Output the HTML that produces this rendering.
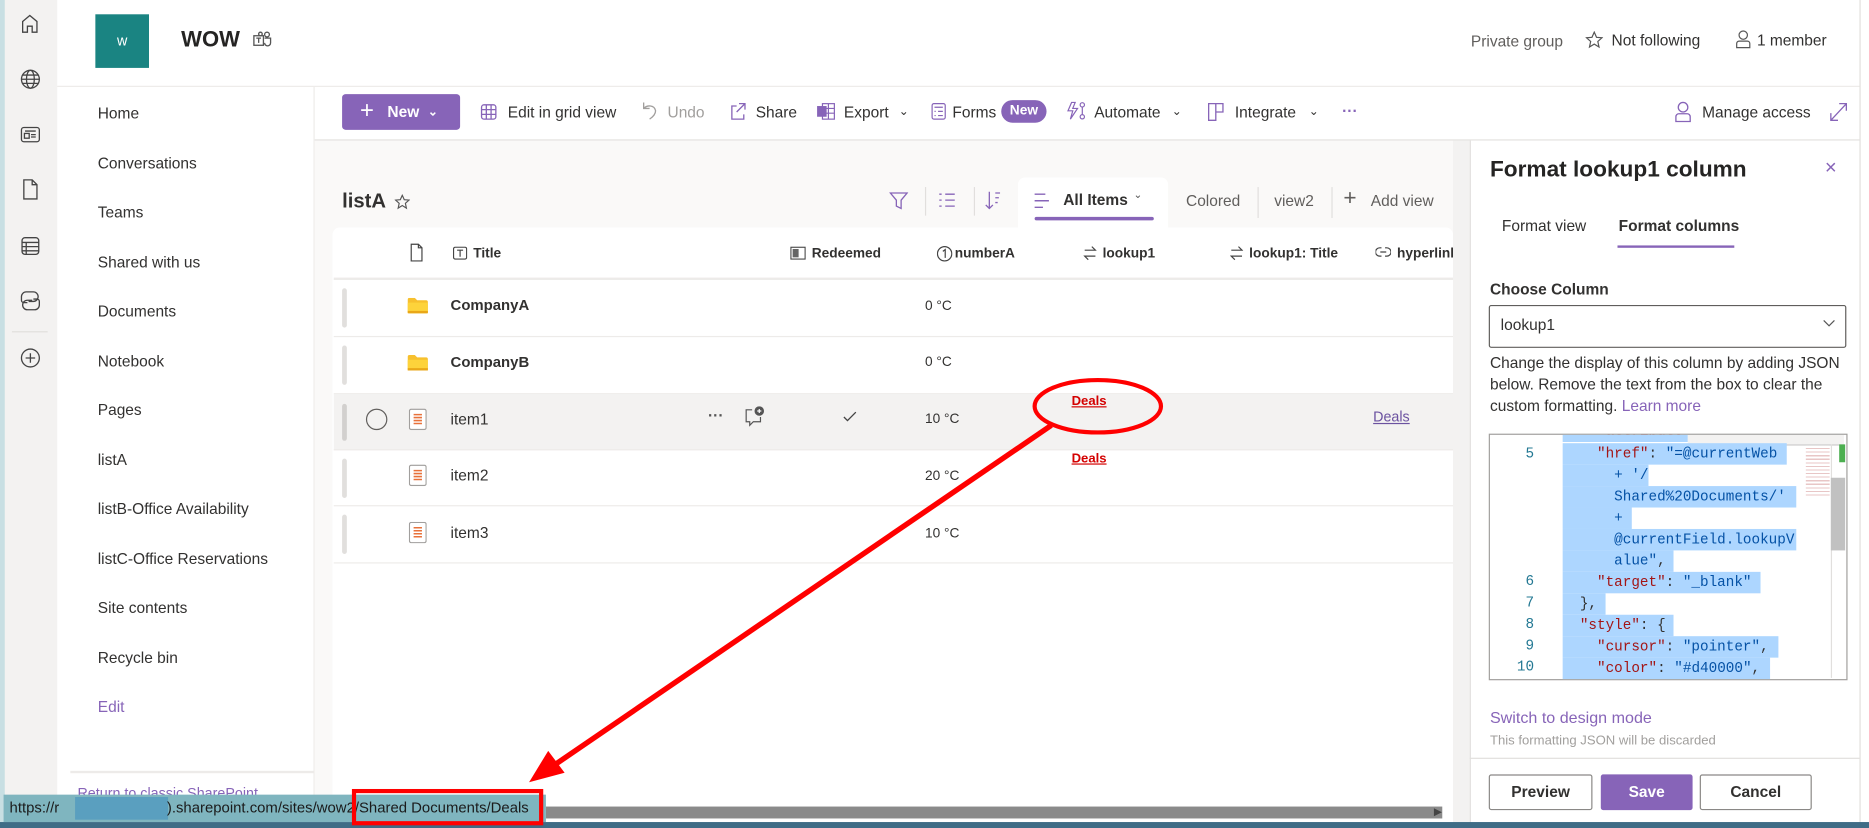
<!DOCTYPE html>
<html><head><meta charset="utf-8">
<style>
html,body{margin:0;padding:0;width:1869px;height:828px;overflow:hidden;background:#fff;}
#w{position:absolute;left:0;top:0;width:1568px;height:695px;transform:scale(1.19196,1.19137);transform-origin:0 0;font-family:"Liberation Sans",sans-serif;color:#323130;font-size:13px;overflow:hidden;background:#fff;}
.a{position:absolute;white-space:nowrap;}
.nav{position:absolute;left:82px;font-size:13px;color:#323130;transform:translateY(-50%);}
.cmd{position:absolute;top:94px;transform:translateY(-50%);font-size:13px;color:#323130;}
.ic{position:absolute;}
.hd{position:absolute;top:213px;transform:translateY(-50%);font-size:11.5px;font-weight:bold;color:#323130;}
.row{position:absolute;left:280px;width:939px;border-bottom:1px solid #edebe9;}
.hbar{position:absolute;left:7px;width:4px;border-radius:2px;background:#e1dfdd;}
.nm{position:absolute;left:98px;font-size:12.5px;font-weight:bold;color:#323130;transform:translateY(-50%);}
.tmp{position:absolute;left:496px;font-size:11.5px;transform:translateY(-50%);}
.cl{position:absolute;left:1311px;height:18px;font-family:"Liberation Mono",monospace;font-size:12px;line-height:18px;background:#add6ff;white-space:pre;}
.ln{position:absolute;width:40px;left:1247px;text-align:right;font-family:"Liberation Mono",monospace;font-size:12px;color:#237893;line-height:18px;}
.k{color:#a31515}.v{color:#0451a5}
.btn{position:absolute;top:650px;height:28px;border:1px solid #8a8886;border-radius:2px;font-size:13px;font-weight:bold;text-align:center;line-height:28px;}
</style></head><body><div id="w">

<div class="a" style="left:0;top:0;width:48px;height:695px;background:#f3f2f1;"></div>
<div class="a" style="left:0;top:0;width:4px;height:695px;background:#c8dfe3;"></div>
<div class="a" style="left:10px;top:278px;width:30px;height:1px;background:#e1dfdd;"></div>
<svg class="ic" style="left:17px;top:11px" width="16" height="17" viewBox="0 0 16 17" fill="none" stroke="#444" stroke-width="1.1"><path d="M2 7 L8 2 L14 7 V16 H10 V11 H6 V16 H2 Z"/></svg>
<svg class="ic" style="left:17px;top:58px" width="17" height="17" viewBox="0 0 17 17" fill="none" stroke="#444" stroke-width="1.1"><circle cx="8.5" cy="8.5" r="7.5"/><ellipse cx="8.5" cy="8.5" rx="3.3" ry="7.5"/><path d="M1 8.5H16M2 5H15M2 12H15"/></svg>
<svg class="ic" style="left:17px;top:105px" width="17" height="16" viewBox="0 0 17 16" fill="none" stroke="#444" stroke-width="1.1"><rect x="1" y="2" width="15" height="12" rx="2"/><rect x="3.5" y="7" width="4" height="4"/><path d="M4 5H13M9 8H13M9 10H13"/></svg>
<svg class="ic" style="left:19px;top:150px" width="13" height="18" viewBox="0 0 13 18" fill="none" stroke="#444" stroke-width="1.1"><path d="M1 1H8L12 5V17H1Z M8 1V5H12"/></svg>
<svg class="ic" style="left:17px;top:198px" width="17" height="17" viewBox="0 0 17 17" fill="none" stroke="#444" stroke-width="1.1"><rect x="1.5" y="1.5" width="14" height="14" rx="2.5"/><path d="M1.5 5.5H15.5M1.5 9H15.5M1.5 12.5H15.5M5 5.5V15.5"/></svg>
<svg class="ic" style="left:17px;top:244px" width="17" height="17" viewBox="0 0 17 17" fill="none" stroke="#444" stroke-width="1.1"><path d="M6 10 H3 a2 2 0 0 1 -2 -2 V5 a4 4 0 0 1 4 -4 H11 a4 4 0 0 1 0 8 H7 M11 7 H14 a2 2 0 0 1 2 2 V12 a4 4 0 0 1 -4 4 H6 a4 4 0 0 1 0 -8 H10"/></svg>
<svg class="ic" style="left:17px;top:292px" width="17" height="17" viewBox="0 0 17 17" fill="none" stroke="#444" stroke-width="1.1"><circle cx="8.5" cy="8.5" r="7.5"/><path d="M8.5 4.5V12.5M4.5 8.5H12.5"/></svg>

<div class="a" style="left:80px;top:12px;width:45px;height:45px;background:#1a8482;color:#fff;font-size:12px;text-align:center;line-height:45px;">w</div>
<div class="a" style="left:152px;top:22px;font-size:18.5px;font-weight:bold;color:#252423;">WOW</div>
<svg class="ic" style="left:212px;top:26px" width="16" height="15" viewBox="0 0 16 15" fill="none" stroke="#555" stroke-width="1.1"><rect x="1" y="4" width="8" height="8"/><path d="M3 6H7M5 6V10"/><circle cx="12" cy="3" r="2"/><path d="M10 6H15V10a2.5 2.5 0 0 1 -5 0"/><circle cx="6.5" cy="2.5" r="1.5"/></svg>
<div class="a" style="left:1234px;top:27px;font-size:13px;color:#605e5c;">Private group</div>
<svg class="ic" style="left:1330px;top:26px" width="15" height="15" viewBox="0 0 15 15" fill="none" stroke="#555" stroke-width="1"><path d="M7.5 1L9.4 5.3L14 5.7L10.5 8.8L11.5 13.5L7.5 11L3.5 13.5L4.5 8.8L1 5.7L5.6 5.3Z"/></svg>
<div class="a" style="left:1352px;top:26px;font-size:13px;color:#323130;">Not following</div>
<svg class="ic" style="left:1456px;top:25px" width="13" height="16" viewBox="0 0 13 16" fill="none" stroke="#555" stroke-width="1"><circle cx="6.5" cy="4.5" r="3.5"/><path d="M1 15V11.5a2 2 0 0 1 2 -2H10a2 2 0 0 1 2 2V15Z"/></svg>
<div class="a" style="left:1474px;top:26px;font-size:13px;color:#323130;">1 member</div>
<div class="a" style="left:48px;top:72px;width:1520px;height:1px;background:#edebe9;"></div>

<div class="a" style="left:263px;top:73px;width:1px;height:622px;background:#edebe9;"></div>
<div class="nav" style="top:95px">Home</div>
<div class="nav" style="top:137px">Conversations</div>
<div class="nav" style="top:178px">Teams</div>
<div class="nav" style="top:220px">Shared with us</div>
<div class="nav" style="top:261px">Documents</div>
<div class="nav" style="top:303px">Notebook</div>
<div class="nav" style="top:344px">Pages</div>
<div class="nav" style="top:386px">listA</div>
<div class="nav" style="top:427px">listB-Office Availability</div>
<div class="nav" style="top:469px">listC-Office Reservations</div>
<div class="nav" style="top:510px">Site contents</div>
<div class="nav" style="top:552px">Recycle bin</div>
<div class="nav" style="top:593px;color:#8764b8">Edit</div>
<div class="a" style="left:59px;top:647px;width:204px;height:2px;background:#edebe9;"></div>
<div class="a" style="left:65px;top:659px;font-size:12px;color:#8764b8;">Return to classic SharePoint</div>

<div class="a" style="left:264px;top:117px;width:1304px;height:1px;background:#e1dfdd;"></div>
<div class="a" style="left:287px;top:79px;width:99px;height:30px;background:#8764b8;border-radius:3px;color:#fff;font-size:13px;font-weight:bold;line-height:30px;"><span style="position:absolute;left:15px;font-size:20px;font-weight:normal;top:-1px">+</span><span style="position:absolute;left:38px">New</span><span style="position:absolute;left:72px;font-size:10px;top:1px">&#8964;</span></div>
<svg class="ic" style="left:403px;top:87px" width="14" height="14" viewBox="0 0 14 14" fill="none" stroke="#8764b8" stroke-width="1.1"><rect x="1" y="1" width="12" height="12" rx="2"/><path d="M1 5H13M1 9H13M5 1V13M9 1V13"/></svg>
<div class="cmd" style="left:426px">Edit in grid view</div>
<svg class="ic" style="left:538px;top:85px" width="14" height="16" viewBox="0 0 14 16" fill="none" stroke="#a19f9d" stroke-width="1.1"><path d="M2 1V6H7M2 6C5 3 11 3 12 8C12 11 10 13 7 15"/></svg>
<div class="cmd" style="left:560px;color:#a19f9d">Undo</div>
<svg class="ic" style="left:612px;top:86px" width="14" height="15" viewBox="0 0 14 15" fill="none" stroke="#8764b8" stroke-width="1.1"><path d="M6 3H2V14H12V10M8 1H13V6M13 1L6 8"/></svg>
<div class="cmd" style="left:634px">Share</div>
<svg class="ic" style="left:685px;top:86px" width="16" height="15" viewBox="0 0 16 15" fill="none" stroke="#8764b8" stroke-width="1"><rect x="5" y="1" width="10" height="13"/><path d="M5 5H15M5 9H15M10 1V14"/><rect x="1" y="3.5" width="7" height="8" fill="#8764b8"/></svg>
<div class="cmd" style="left:708px">Export</div>
<div class="cmd" style="left:754px;font-size:10px">&#8964;</div>
<svg class="ic" style="left:781px;top:86px" width="13" height="15" viewBox="0 0 13 15" fill="none" stroke="#8764b8" stroke-width="1"><rect x="1" y="1" width="11" height="13" rx="1.5"/><path d="M3 4H10M3 7.5H4M6 7.5H10M3 11H4M6 11H10"/></svg>
<div class="cmd" style="left:799px">Forms</div>
<div class="a" style="left:840px;top:84px;width:38px;height:19px;border-radius:10px;background:#8764b8;color:#fff;font-size:11.5px;font-weight:bold;text-align:center;line-height:19px;">New</div>
<svg class="ic" style="left:895px;top:85px" width="16" height="17" viewBox="0 0 16 17" fill="none" stroke="#8764b8" stroke-width="1"><path d="M4 1L1 8H5L3 15L9 6H5L7 1Z"/><circle cx="13" cy="3" r="1.8"/><circle cx="13" cy="13" r="1.8"/><path d="M13 5V11"/></svg>
<div class="cmd" style="left:918px">Automate</div>
<div class="cmd" style="left:983px;font-size:10px">&#8964;</div>
<svg class="ic" style="left:1013px;top:86px" width="14" height="16" viewBox="0 0 14 16" fill="none" stroke="#8764b8" stroke-width="1.1"><path d="M1 1H7V15H1Z M7 1H13V8H7"/></svg>
<div class="cmd" style="left:1036px">Integrate</div>
<div class="cmd" style="left:1098px;font-size:10px">&#8964;</div>
<div class="cmd" style="left:1126px;color:#8764b8;font-weight:bold;top:93px">···</div>
<svg class="ic" style="left:1405px;top:85px" width="14" height="18" viewBox="0 0 14 18" fill="none" stroke="#8764b8" stroke-width="1.1"><circle cx="7" cy="5" r="4"/><path d="M1 17V13a2.5 2.5 0 0 1 2.5 -2.5H10.5a2.5 2.5 0 0 1 2.5 2.5V17Z"/></svg>
<div class="cmd" style="left:1428px">Manage access</div>
<svg class="ic" style="left:1535px;top:86px" width="15" height="16" viewBox="0 0 15 16" fill="none" stroke="#8764b8" stroke-width="1.1"><path d="M1 9V15H7M14 7V1H8M1 15L14 1"/></svg>

<div class="a" style="left:264px;top:118px;width:969px;height:577px;background:#faf9f8;"></div>
<div class="a" style="left:287px;top:159px;font-size:17px;font-weight:bold;color:#323130;">listA</div>
<svg class="ic" style="left:331px;top:163px" width="13" height="13" viewBox="0 0 15 15" fill="none" stroke="#555" stroke-width="1.1"><path d="M7.5 1L9.4 5.3L14 5.7L10.5 8.8L11.5 13.5L7.5 11L3.5 13.5L4.5 8.8L1 5.7L5.6 5.3Z"/></svg>
<svg class="ic" style="left:746px;top:161px" width="16" height="15" viewBox="0 0 16 15" fill="none" stroke="#8764b8" stroke-width="1.1"><path d="M1 1H15L10 7V14L6 12V7Z"/></svg>
<div class="a" style="left:776px;top:157px;width:1px;height:24px;background:#e1dfdd;"></div>
<svg class="ic" style="left:787px;top:161px" width="15" height="15" viewBox="0 0 15 15" fill="none" stroke="#8764b8" stroke-width="1.1"><path d="M1 2H3M6 2H14M1 7H3M6 7H14M1 12H3M6 12H14"/></svg>
<div class="a" style="left:817px;top:157px;width:1px;height:24px;background:#e1dfdd;"></div>
<svg class="ic" style="left:826px;top:160px" width="14" height="17" viewBox="0 0 14 17" fill="none" stroke="#8764b8" stroke-width="1.1"><path d="M4 1V15M1 12L4 15L7 12M9 2H13M9 6H12M9 10H11"/></svg>
<div class="a" style="left:854px;top:149px;width:126px;height:42px;background:#fff;border-radius:6px 6px 0 0;"></div>
<svg class="ic" style="left:867px;top:162px" width="14" height="13" viewBox="0 0 14 13" fill="none" stroke="#8764b8" stroke-width="1.2"><path d="M1 1H10M1 6.5H13M1 12H8"/></svg>
<div class="a" style="left:892px;top:160px;font-size:13px;font-weight:bold;">All Items</div>
<div class="a" style="left:951px;top:158px;font-size:9px;color:#555;">&#8964;</div>
<div class="a" style="left:868px;top:182px;width:100px;height:3px;background:#8764b8;border-radius:2px;"></div>
<div class="a" style="left:995px;top:161px;font-size:13px;color:#605e5c;">Colored</div>
<div class="a" style="left:1055px;top:157px;width:1px;height:26px;background:#e1dfdd;"></div>
<div class="a" style="left:1069px;top:161px;font-size:13px;color:#605e5c;">view2</div>
<div class="a" style="left:1117px;top:157px;width:1px;height:26px;background:#e1dfdd;"></div>
<div class="a" style="left:1127px;top:156px;font-size:19px;color:#605e5c;">+</div>
<div class="a" style="left:1150px;top:161px;font-size:13px;color:#605e5c;">Add view</div>

<div class="a" style="left:279px;top:191px;width:940px;height:504px;background:#fff;border-radius:6px 6px 0 0;"></div>
<div class="a" style="left:280px;top:233px;width:939px;height:2px;background:#edebe9;"></div>
<svg class="ic" style="left:344px;top:204px" width="11" height="16" viewBox="0 0 11 16" fill="none" stroke="#444" stroke-width="1"><path d="M1 1H7L10 4V15H1Z M7 1V4H10"/></svg>
<svg class="ic" style="left:380px;top:207px" width="12" height="11" viewBox="0 0 12 11" fill="none" stroke="#444" stroke-width="1"><rect x="0.5" y="0.5" width="11" height="10" rx="1.5"/><path d="M3.5 3H8.5M6 3V8.5"/></svg>
<div class="hd" style="left:397px">Title</div>
<svg class="ic" style="left:663px;top:207px" width="13" height="11" viewBox="0 0 13 11"><rect x="0.5" y="0.5" width="12" height="10" fill="none" stroke="#444"/><rect x="2" y="2" width="5" height="7" fill="#666"/></svg>
<div class="hd" style="left:681px">Redeemed</div>
<svg class="ic" style="left:786px;top:206px" width="13" height="14" viewBox="0 0 13 14" fill="none" stroke="#444" stroke-width="1"><circle cx="6.5" cy="7" r="6"/><path d="M5 5L7 3.5V10.5"/></svg>
<div class="hd" style="left:801px">numberA</div>
<svg class="ic" style="left:909px;top:206px" width="11" height="13" viewBox="0 0 11 13" fill="none" stroke="#444" stroke-width="1"><path d="M1 4H10L7 1M10 9H1L4 12"/></svg>
<div class="hd" style="left:925px">lookup1</div>
<svg class="ic" style="left:1032px;top:206px" width="11" height="13" viewBox="0 0 11 13" fill="none" stroke="#444" stroke-width="1"><path d="M1 4H10L7 1M10 9H1L4 12"/></svg>
<div class="hd" style="left:1048px">lookup1: Title</div>
<svg class="ic" style="left:1154px;top:207px" width="13" height="9" viewBox="0 0 13 9" fill="none" stroke="#444" stroke-width="1"><path d="M5 1H3.5a3.5 3.5 0 0 0 0 7H5M8 1H9.5a3.5 3.5 0 0 1 0 7H8M4 4.5H9"/></svg>
<div class="hd" style="left:1172px;width:47px;overflow:hidden">hyperlink</div>

<div class="row" style="top:235px;height:47px"><div class="hbar" style="top:7px;height:33px"></div>
<svg class="ic" style="left:62px;top:15px" width="17" height="13" viewBox="0 0 17 13"><path d="M0 1.5a1.5 1.5 0 0 1 1.5 -1.5H6L8 2H15.5a1.5 1.5 0 0 1 1.5 1.5V12a1 1 0 0 1 -1 1H1a1 1 0 0 1 -1 -1Z" fill="#f7c02e"/><rect x="0" y="4" width="17" height="9" rx="1" fill="#fdd33b"/><rect x="0" y="11" width="17" height="2" fill="#e9a718"/></svg>
<div class="nm" style="top:21px">CompanyA</div><div class="tmp" style="top:22px">0 °C</div></div>
<div class="row" style="top:283px;height:47px"><div class="hbar" style="top:7px;height:33px"></div>
<svg class="ic" style="left:62px;top:15px" width="17" height="13" viewBox="0 0 17 13"><path d="M0 1.5a1.5 1.5 0 0 1 1.5 -1.5H6L8 2H15.5a1.5 1.5 0 0 1 1.5 1.5V12a1 1 0 0 1 -1 1H1a1 1 0 0 1 -1 -1Z" fill="#f7c02e"/><rect x="0" y="4" width="17" height="9" rx="1" fill="#fdd33b"/><rect x="0" y="11" width="17" height="2" fill="#e9a718"/></svg>
<div class="nm" style="top:21px">CompanyB</div><div class="tmp" style="top:21px">0 °C</div></div>
<div class="row" style="top:331px;height:46px;background:#f3f2f1"><div class="hbar" style="top:8px;height:31px;background:#d2d0ce"></div>
<div class="a" style="left:27px;top:12px;width:16px;height:16px;border:1px solid #605e5c;border-radius:50%;"></div>
<svg class="ic" style="left:63px;top:12px" width="15" height="18" viewBox="0 0 15 18"><rect x="0.5" y="0.5" width="14" height="17" rx="1.5" fill="#fff" stroke="#a19f9d"/><path d="M4 5H11M4 7.5H11M4 10H11M4 12.5H11" stroke="#e8713a" stroke-width="1.3"/></svg>
<div class="nm" style="top:21px;font-weight:normal;font-size:13px">item1</div>
<div class="a" style="left:314px;top:10px;font-size:13px;font-weight:bold;color:#555">···</div>
<svg class="ic" style="left:344px;top:10px" width="18" height="18" viewBox="0 0 18 18" fill="none" stroke="#555" stroke-width="1"><path d="M7 3H2V13H5V16L8 13H14V9"/><circle cx="13" cy="4" r="3.5" fill="#555"/><path d="M13 2.3V5.7M11.3 4H14.7" stroke="#fff"/></svg>
<svg class="ic" style="left:427px;top:14px" width="12" height="9" viewBox="0 0 12 9" fill="none" stroke="#444" stroke-width="1.1"><path d="M1 5L4 8L11 1"/></svg>
<div class="tmp" style="top:21px">10 °C</div>
<div class="a" style="left:872px;top:12px;font-size:12px;color:#6b52a0;text-decoration:underline">Deals</div>
<div class="a" style="left:619px;top:0px;font-size:11px;font-weight:bold;color:#d40000;text-decoration:underline">Deals</div></div>
<div class="row" style="top:378px;height:46px"><div class="hbar" style="top:7px;height:33px"></div>
<svg class="ic" style="left:63px;top:12px" width="15" height="18" viewBox="0 0 15 18"><rect x="0.5" y="0.5" width="14" height="17" rx="1.5" fill="#fff" stroke="#a19f9d"/><path d="M4 5H11M4 7.5H11M4 10H11M4 12.5H11" stroke="#e8713a" stroke-width="1.3"/></svg>
<div class="nm" style="top:21px;font-weight:normal;font-size:13px">item2</div>
<div class="tmp" style="top:22px">20 °C</div>
<div class="a" style="left:619px;top:1px;font-size:11px;font-weight:bold;color:#d40000;text-decoration:underline">Deals</div></div>
<div class="row" style="top:425px;height:47px"><div class="hbar" style="top:7px;height:33px"></div>
<svg class="ic" style="left:63px;top:13px" width="15" height="18" viewBox="0 0 15 18"><rect x="0.5" y="0.5" width="14" height="17" rx="1.5" fill="#fff" stroke="#a19f9d"/><path d="M4 5H11M4 7.5H11M4 10H11M4 12.5H11" stroke="#e8713a" stroke-width="1.3"/></svg>
<div class="nm" style="top:22px;font-weight:normal;font-size:13px">item3</div>
<div class="tmp" style="top:23px">10 °C</div></div>
<div class="a" style="left:1219px;top:118px;width:14px;height:577px;background:#f3f2f1;"></div>

<div class="a" style="left:1233px;top:118px;width:327px;height:577px;background:#fff;border-left:1px solid #e1dfdd;"></div>
<div class="a" style="left:1250px;top:132px;font-size:19px;font-weight:bold;color:#252423;">Format lookup1 column</div>
<div class="a" style="left:1531px;top:131px;font-size:17px;color:#8764b8;">×</div>
<div class="a" style="left:1260px;top:182px;font-size:13px;">Format view</div>
<div class="a" style="left:1358px;top:182px;font-size:13px;font-weight:bold;">Format columns</div>
<div class="a" style="left:1357px;top:206px;width:98px;height:2px;background:#8764b8;"></div>
<div class="a" style="left:1250px;top:235px;font-size:13px;font-weight:bold;">Choose Column</div>
<div class="a" style="left:1249px;top:256px;width:298px;height:34px;border:1px solid #605e5c;border-radius:2px;"></div>
<div class="a" style="left:1259px;top:265px;font-size:13px;">lookup1</div>
<svg class="ic" style="left:1529px;top:268px" width="11" height="7" viewBox="0 0 11 7" fill="none" stroke="#555" stroke-width="1"><path d="M1 1L5.5 5.5L10 1"/></svg>
<div class="a" style="left:1250px;top:296px;font-size:13px;line-height:18px;white-space:normal;width:305px;color:#323130;">Change the display of this column by adding JSON below. Remove the text from the box to clear the custom formatting. <span style="color:#8764b8">Learn more</span></div>
<div class="a" style="left:1249px;top:364px;width:299px;height:205px;border:1px solid #a19f9d;overflow:hidden;background:#fff;"></div>
<div class="a" style="left:1250px;top:365px;width:298px;height:205px;overflow:hidden;">
 <div class="cl" style="left:61px;top:-12px;width:105px;color:#a31515">    "attribute</div>
 <div class="a" style="left:166px;top:0;width:131px;height:8px;background:#f3f2f1;border-bottom:1px solid #ccc"></div>
</div>
<div class="ln" style="top:372px">5</div>
<div class="ln" style="top:479px">6</div>
<div class="ln" style="top:497px">7</div>
<div class="ln" style="top:515px">8</div>
<div class="ln" style="top:533px">9</div>
<div class="ln" style="top:551px">10</div>
<div class="cl" style="top:372px;width:188px">    <span class="k">"href"</span>: <span class="v">"=@currentWeb</span></div>
<div class="cl" style="top:390px;width:72px">      <span class="v">+ '/</span></div>
<div class="cl" style="top:408px;width:196px">      <span class="v">Shared%20Documents/'</span></div>
<div class="cl" style="top:426px;width:58px">      <span class="v">+</span></div>
<div class="cl" style="top:444px;width:196px">      <span class="v">@currentField.lookupV</span></div>
<div class="cl" style="top:462px;width:93px">      <span class="v">alue"</span>,</div>
<div class="cl" style="top:480px;width:166px">    <span class="k">"target"</span>: <span class="v">"_blank"</span></div>
<div class="cl" style="top:498px;width:36px">  },</div>
<div class="cl" style="top:516px;width:93px">  <span class="k">"style"</span>: {</div>
<div class="cl" style="top:534px;width:181px">    <span class="k">"cursor"</span>: <span class="v">"pointer"</span>,</div>
<div class="cl" style="top:552px;width:174px">    <span class="k">"color"</span>: <span class="v">"#d40000"</span>,</div>
<div class="a" style="left:1515px;top:374px;width:20px;height:42px;background:repeating-linear-gradient(#fff 0 2px,#d9a0a0 2px 3px);opacity:.6"></div>
<div class="a" style="left:1536px;top:373px;width:12px;height:196px;border-left:1px solid #e1dfdd;"></div>
<div class="a" style="left:1543px;top:373px;width:5px;height:15px;background:#4caf50;"></div>
<div class="a" style="left:1536px;top:401px;width:12px;height:61px;background:#c1c1c1;"></div>
<div class="a" style="left:1250px;top:595px;font-size:13.5px;color:#8764b8;">Switch to design mode</div>
<div class="a" style="left:1250px;top:616px;font-size:11px;color:#a19f9d;">This formatting JSON will be discarded</div>
<div class="a" style="left:1233px;top:636px;width:327px;height:1px;background:#e1dfdd;"></div>
<div class="btn" style="left:1249px;width:85px;">Preview</div>
<div class="btn" style="left:1343px;width:75px;background:#8764b8;border-color:#8764b8;color:#fff;">Save</div>
<div class="btn" style="left:1426px;width:92px;">Cancel</div>
<div class="a" style="left:1560px;top:0;width:8px;height:695px;background:#fff;border-left:1px solid #e1dfdd;"></div>
<div class="a" style="left:0;top:690px;width:1568px;height:5px;background:#3f6c86;"></div>

<div class="a" style="left:458px;top:677px;width:752px;height:10px;background:#8a8a8a;"></div>
<div class="a" style="left:1203px;top:676px;font-size:9px;color:#444;">▶</div>
<div class="a" style="left:3px;top:667px;width:455px;height:23px;background:#7fb5bf;"></div>
<div class="a" style="left:63px;top:669px;width:78px;height:19px;background:#5a9fbf;"></div>
<div class="a" style="left:8px;top:671px;font-size:12.5px;color:#1b1b1b;">https://r</div>
<div class="a" style="left:140px;top:671px;font-size:12.5px;color:#1b1b1b;">).sharepoint.com/sites/wow2/Shared Documents/Deals</div>

<svg class="ic" style="left:0;top:0" width="1568" height="695" viewBox="0 0 1568 695" fill="none">
<ellipse cx="921" cy="341" rx="53" ry="22" stroke="#ff0000" stroke-width="3.5"/>
<path d="M882 357 L458 647" stroke="#ff0000" stroke-width="4.5"/>
<path d="M446 655 L460 632 L472 648 Z" fill="#ff0000" stroke="#ff0000" stroke-width="2"/>
<rect x="297" y="664" width="157" height="27" stroke="#ff0000" stroke-width="3.5"/>
</svg>
</div></body></html>
